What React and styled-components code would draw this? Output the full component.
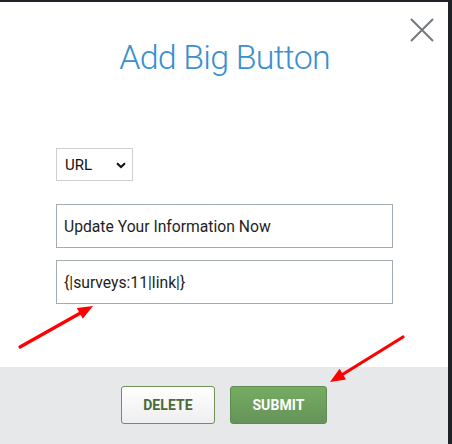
import React, { useState } from 'react'
import styled, { createGlobalStyle } from 'styled-components'

const GlobalStyle = createGlobalStyle`
	html, body {
		margin: 0;
		padding: 0;
		background: #ffffff;
	}
	body {
		font-family: Roboto, 'Liberation Sans', Arial, sans-serif;
	}
	* {
		box-sizing: border-box;
	}
`

const Screen = styled.div`
	position: relative;
	width: 452px;
	height: 444px;
	display: flex;
	background: #1f2327;
	padding-top: 2px;
	padding-right: 4px;
	overflow: hidden;
`

const Modal = styled.div`
	position: relative;
	flex: 1;
	display: flex;
	flex-direction: column;
	background: #ffffff;
`

const Body = styled.div`
	flex: 1;
	display: flex;
	flex-direction: column;
	padding: 35px 55px 0 56px;
`

const Title = styled.h2`
	margin: 0;
	text-align: center;
	font-family: Roboto, 'Liberation Sans', sans-serif;
	font-weight: 300;
	font-size: 34px;
	letter-spacing: -0.8px;
	line-height: 40px;
	color: #3b8fd0;
`

const CloseButton = styled.button`
	position: absolute;
	top: 13px;
	right: 11px;
	width: 30px;
	height: 30px;
	padding: 0;
	border: none;
	background: transparent;
	display: flex;
	align-items: center;
	justify-content: center;
	cursor: pointer;
`

const Form = styled.div`
	display: flex;
	flex-direction: column;
	margin-top: 71px;
`

const SelectWrap = styled.div`
	position: relative;
	width: 77px;
	height: 33px;
	margin-bottom: 23px;
`

const Select = styled.select`
	appearance: none;
	width: 100%;
	height: 100%;
	padding: 0 0 0 8px;
	border: 1px solid #cfcfcf;
	border-radius: 0;
	background: #ffffff;
	font-family: Roboto, 'Liberation Sans', sans-serif;
	font-size: 15px;
	color: #111;
	outline: none;
`

const Chevron = styled.svg`
	position: absolute;
	top: 14px;
	right: 7px;
	pointer-events: none;
`

const Input = styled.input`
	width: 100%;
	height: 44px;
	padding: 0 7px;
	margin-bottom: ${({ $gap }) => $gap || 0}px;
	border: 1px solid #a3abb3;
	border-radius: 0;
	font-family: Roboto, 'Liberation Sans', sans-serif;
	font-size: 15.7px;
	color: #1e1e1e;
	outline: none;
`

const Footer = styled.div`
	height: 77px;
	background: #e7e8ea;
	display: flex;
	align-items: center;
	justify-content: center;
	gap: 15px;
	padding-bottom: 1px;
`

const Button = styled.button`
	height: 38px;
	width: ${({ $primary }) => ($primary ? 97 : 94)}px;
	border-radius: 3px;
	border: 1px solid ${({ $primary }) => ($primary ? '#5e8b4f' : '#6f9158')};
	background: ${({ $primary }) =>
		$primary
			? 'linear-gradient(#74ad60, #66935a)'
			: 'linear-gradient(#ffffff, #eeeeee)'};
	color: ${({ $primary }) => ($primary ? '#ffffff' : '#4c6a3b')};
	font-family: Roboto, 'Liberation Sans', sans-serif;
	font-weight: 700;
	font-size: 14px;
	letter-spacing: 0.1px;
	cursor: pointer;
`

const Overlay = styled.svg`
	position: absolute;
	left: 0;
	top: 0;
	pointer-events: none;
`

function Arrow({ x1, y1, x2, y2, head }) {
	return (
		<g>
			<line
				x1={x1}
				y1={y1}
				x2={x2}
				y2={y2}
				stroke='#ff0000'
				strokeWidth='3.2'
				strokeLinecap='round'
			/>
			<polygon points={head} fill='#ff0000' />
		</g>
	)
}

function App() {
	const [type, setType] = useState('url')
	const [label, setLabel] = useState('Update Your Information Now')
	const [link, setLink] = useState('{|surveys:11|link|}')

	return (
		<>
			<GlobalStyle />
			<Screen>
				<Modal>
					<CloseButton aria-label='Close'>
						<svg width='24' height='24' viewBox='0 0 24 24'>
							<path
								d='M1 1 L23 23 M23 1 L1 23'
								stroke='#73787d'
								strokeWidth='2'
								fill='none'
							/>
						</svg>
					</CloseButton>
					<Body>
						<Title>Add Big Button</Title>
						<Form>
							<SelectWrap>
								<Select value={type} onChange={e => setType(e.target.value)}>
									<option value='url'>URL</option>
									<option value='survey'>Survey</option>
								</Select>
								<Chevron width='10' height='7' viewBox='0 0 10 7'>
									<path
										d='M1 1.2 L5 5 L9 1.2'
										stroke='#111'
										strokeWidth='2'
										fill='none'
									/>
								</Chevron>
							</SelectWrap>
							<Input
								$gap={12}
								value={label}
								onChange={e => setLabel(e.target.value)}
							/>
							<Input value={link} onChange={e => setLink(e.target.value)} />
						</Form>
					</Body>
					<Footer>
						<Button>DELETE</Button>
						<Button $primary>SUBMIT</Button>
					</Footer>
				</Modal>
				<Overlay width='452' height='444' viewBox='0 0 452 444'>
					<Arrow
						x1={20}
						y1={347}
						x2={84}
						y2={311}
						head='93,306 82.8,318.8 76.8,308'
					/>
					<Arrow
						x1={403}
						y1={337}
						x2={340}
						y2={376}
						head='330,382 346,379.4 339.6,368.8'
					/>
				</Overlay>
			</Screen>
		</>
	)
}

export default App
